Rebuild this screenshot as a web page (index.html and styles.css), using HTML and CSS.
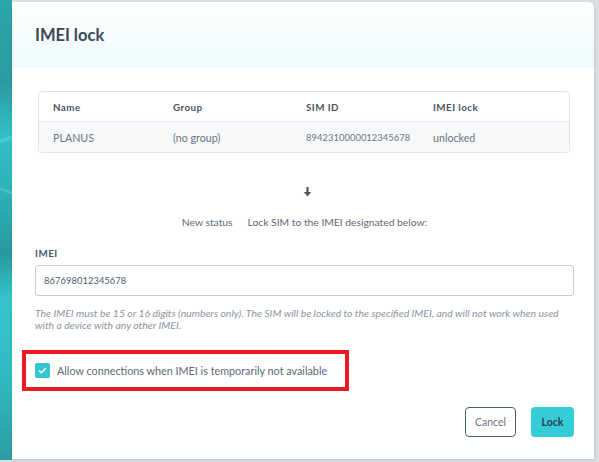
FILE: index.html
```html
<!DOCTYPE html>
<html>
<head>
<meta charset="utf-8">
<link rel="stylesheet" href="styles.css">
</head>
<body>
<div class="page">
  <div class="strip"></div>
  <div class="modal">
    <div class="modal-header">
      <h1 class="title">IMEI lock</h1>
    </div>
    <div class="modal-body">
      <div class="table">
        <div class="row head">
          <div class="cell">Name</div>
          <div class="cell">Group</div>
          <div class="cell">SIM ID</div>
          <div class="cell">IMEI lock</div>
        </div>
        <div class="row body-row">
          <div class="cell">PLANUS</div>
          <div class="cell">(no group)</div>
          <div class="cell digits">8942310000012345678</div>
          <div class="cell">unlocked</div>
        </div>
      </div>
      <div class="arrow">
        <svg width="9" height="10" viewBox="0 0 9 10"><path d="M4.5 0v6" stroke="#4a5565" stroke-width="2.2" fill="none"/><path d="M0.8 5h7.4l-3.7 4.6z" fill="#4a5565"/></svg>
      </div>
      <div class="status">
        <span>New status</span>
        <span>Lock SIM to the IMEI designated below:</span>
      </div>
      <label class="field-label">IMEI</label>
      <div class="input"><span class="digits">867698012345678</span></div>
      <p class="help">The IMEI must be 15 or 16 digits (numbers only). The SIM will be locked to the specified IMEI, and will not work when used with a device with any other IMEI.</p>
      <div class="check-row">
        <span class="checkbox">
          <svg width="9" height="7" viewBox="0 0 9 7"><path d="M1 3.6l2.3 2.2L8 1" stroke="#fff" stroke-width="1.4" fill="none"/></svg>
        </span>
        <span class="check-label">Allow connections when IMEI is temporarily not available</span>
      </div>
      <div class="actions">
        <button class="btn btn-cancel">Cancel</button>
        <button class="btn btn-lock">Lock</button>
      </div>
    </div>
  </div>
</div>
</body>
</html>
```

FILE: styles.css
```css
* { box-sizing: border-box; }
html, body { margin: 0; padding: 0; }
body {
  background: #dadee3;
  font-family: "Lato", "Open Sans", sans-serif;
  width: 599px;
  height: 462px;
  overflow: hidden;
}
.page {
  display: flex;
  height: 462px;
}
.strip {
  width: 12px;
  height: 460px;
  flex: none;
  background:
    linear-gradient(160deg, transparent 0 30%, rgba(255,255,255,0.18) 30.3%, transparent 31%),
    linear-gradient(20deg, transparent 0 58%, rgba(255,255,255,0.2) 58.3%, transparent 59%),
    linear-gradient(175deg, #2ba6ad 0%, #2a9aa2 18%, #33c0c8 30%, #2bacb3 45%, #2898a0 55%, #35c4cb 65%, #31bcc4 80%, #2a9ca3 100%);
}
.modal {
  width: 583px;
  height: 457px;
  margin-top: 2px;
  background: #fff;
  border-top-right-radius: 6px;
  border-right: 1px solid #c9ced5;
  box-shadow: 0 1px 2px rgba(0,0,0,0.12);
  display: flex;
  flex-direction: column;
}
.modal-header {
  height: 66px;
  background: linear-gradient(180deg, #ffffff 0%, #eefafb 100%);
  border-top-right-radius: 6px;
  padding: 23px 0 0 23px;
}
.title {
  margin: 0;
  font-size: 16.5px;
  font-weight: 700;
  color: #3d4857;
}
.modal-body {
  padding: 23px 20px 0 23px;
  display: flex;
  flex-direction: column;
}
.table {
  margin: 0 4px 0 3px;
  border: 1px solid #e1e5ea;
  border-radius: 4px;
  overflow: hidden;
}
.row {
  display: grid;
  grid-template-columns: 120px 133px 127px 1fr;
  padding-left: 14px;
  align-items: center;
  height: 30px;
}
.head {
  height: 30px;
  padding-top: 1px;
  font-size: 9.8px;
  font-weight: 700;
  letter-spacing: 0.45px;
  color: #4a5565;
  border-bottom: 1px solid #e6e9ed;
  box-shadow: 0 1px 3px rgba(0,0,0,0.05);
}
.body-row {
  background: #f7f8fa;
  font-size: 10.7px;
  color: #6b7585;
}
.digits { font-size: 9.4px; letter-spacing: 0.05px; }
.arrow {
  display: flex;
  justify-content: center;
  margin-top: 34px;
  height: 10px;
  padding-left: 6px;
}
.status {
  display: flex;
  justify-content: center;
  gap: 15px;
  margin-top: 19px;
  font-size: 10.3px;
  color: #5d6877;
}
.field-label {
  margin-top: 19px;
  font-size: 9.8px;
  font-weight: 700;
  letter-spacing: 0.5px;
  color: #4a5565;
}
.input {
  margin-top: 6px;
  height: 31px;
  border: 1px solid #c5ccd4;
  border-radius: 3px;
  padding: 0 8px;
  display: flex;
  align-items: center;
  color: #4f5a69;
}
.help {
  margin: 11px 0 0;
  font-size: 10.4px;
  font-style: italic;
  line-height: 12px;
  color: #8a94a3;
  padding-right: 6px;
}
.check-row {
  margin: 19px 0 0 -13px;
  width: 327px;
  height: 41px;
  border: 4px solid #e91c24;
  display: flex;
  align-items: center;
  padding-left: 9px;
  gap: 7px;
}
.checkbox {
  width: 15px;
  height: 15px;
  background: #33c5d1;
  border-radius: 2px;
  display: flex;
  align-items: center;
  justify-content: center;
}
.check-label {
  font-size: 10.8px;
  color: #5d6877;
}
.actions {
  display: flex;
  justify-content: flex-end;
  gap: 15px;
  margin-top: 16px;
}
.btn {
  font-family: inherit;
  height: 30px;
  border-radius: 4px;
  font-size: 10.5px;
  padding: 0;
  cursor: pointer;
}
.btn-cancel {
  width: 51px;
  background: #fff;
  border: 1.5px solid #4e5d70;
  color: #6b7585;
}
.btn-lock {
  width: 43px;
  background: #34ccd7;
  border: none;
  color: #2e3d4f;
  font-weight: 700;
}
```
